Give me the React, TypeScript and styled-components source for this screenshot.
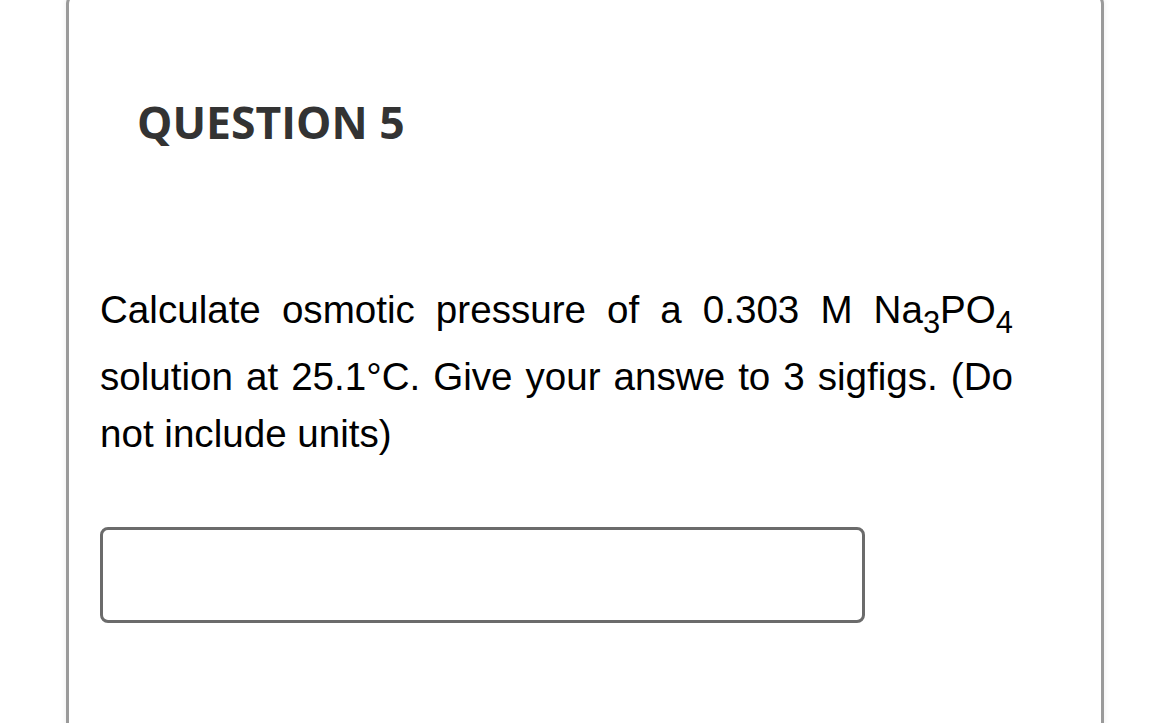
import React from "react";
import styled, { createGlobalStyle } from "styled-components";

const Global = createGlobalStyle`
  html, body { margin: 0; padding: 0; background: #ffffff; }
  body { overflow: hidden; }
`;

const Page = styled.div`
  width: 1170px;
  height: 723px;
  background: #ffffff;
  padding: 0 0 0 66px;
  box-sizing: border-box;
  overflow: hidden;
`;

const Card = styled.section`
  width: 1038px;
  height: 760px;
  margin-top: -8px;
  box-sizing: border-box;
  border: 3px solid #9a9a9a;
  border-radius: 12px;
  box-shadow: 0 0 6px rgba(0, 0, 0, 0.08);
  padding: 102px 88px 0 31px;
  background: #ffffff;
`;

const Heading = styled.h2`
  margin: 0 0 0 37px;
  font-family: "Open Sans", "Noto Sans", sans-serif;
  font-weight: 700;
  font-size: 44.5px;
  line-height: 50px;
  color: #333333;
  letter-spacing: 0;
`;

const Prompt = styled.p`
  margin: 134px 0 0 0;
  font-family: "Liberation Sans", Arial, sans-serif;
  font-size: 38.6px;
  line-height: 57px;
  color: #000000;
  text-align: justify;
`;

const Sub = styled.sub`
  font-size: 0.8em;
  line-height: 51px;
  vertical-align: -10px;
`;

const AnswerInput = styled.input`
  display: block;
  margin-top: 65px;
  width: 765px;
  height: 96px;
  box-sizing: border-box;
  border: 3px solid #6b6b6b;
  border-radius: 8px;
  background: #ffffff;
  outline: none;
  font-family: "Liberation Sans", Arial, sans-serif;
  font-size: 30px;
  padding: 0 14px;
`;

export default function App() {
  return (
    <>
      <Global />
      <Page>
        <Card>
          <Heading>QUESTION 5</Heading>
          <Prompt>
            Calculate osmotic pressure of a 0.303 M Na<Sub>3</Sub>PO<Sub>4</Sub>{" "}
            solution at 25.1°C. Give your answe to 3 sigfigs. (Do not include units)
          </Prompt>
          <AnswerInput type="text" aria-label="Answer" />
        </Card>
      </Page>
    </>
  );
}
